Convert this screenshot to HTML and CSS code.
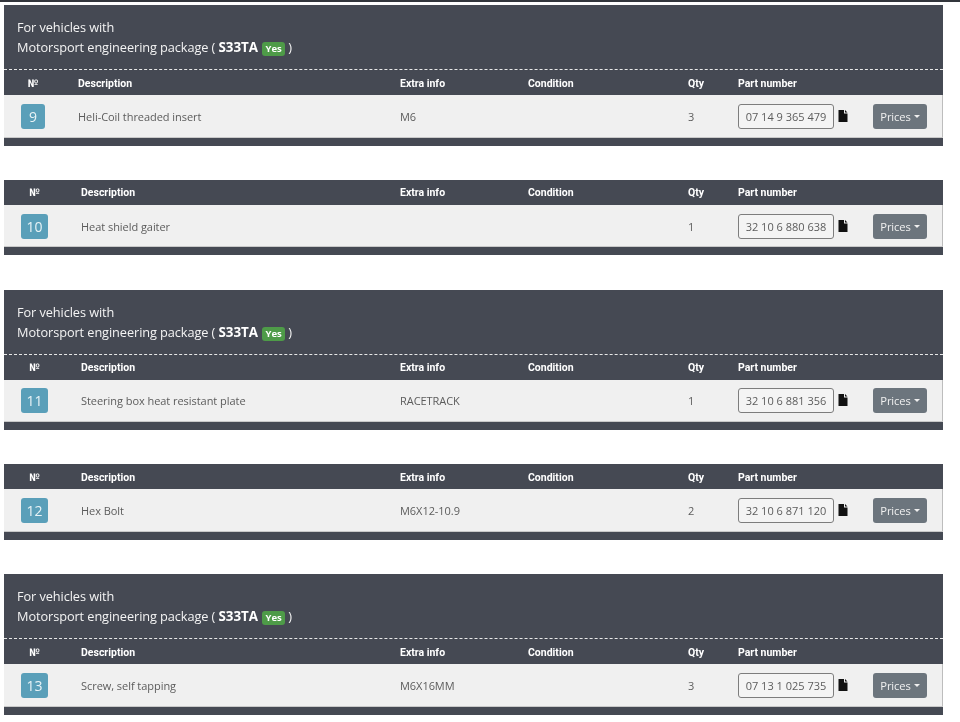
FILE: index.html
```html
<!DOCTYPE html>
<html lang="en">
<head>
<meta charset="utf-8">
<title>Parts</title>
<link rel="stylesheet" href="styles.css">
</head>
<body>
<div class="topbar"></div>
<main class="list">
  <section class="panel">
    <div class="note">For vehicles with<br>Motorsport engineering package ( <b>S33TA</b> <span class="yes">Yes</span> )</div>
    <table class="parts">
      <thead><tr><th class="c-num"><span class="num-head">№</span></th><th>Description</th><th class="c-extra">Extra info</th><th class="c-cond">Condition</th><th class="c-qty">Qty</th><th class="c-part">Part number</th><th class="c-btn"></th></tr></thead>
      <tbody><tr><td class="c-num"><span class="badge">9</span></td><td>Heli-Coil threaded insert</td><td>M6</td><td></td><td>3</td><td class="c-part"><div class="pn"><span class="pn-box">07 14 9 365 479</span><svg class="doc" viewBox="0 0 10 12"><path d="M0.5 0H6V3.5H9.5V12H0.5ZM7 0L9.5 2.5H7Z"/></svg></div></td><td class="c-btn"><span class="btn">Prices<i class="caret"></i></span></td></tr></tbody>
    </table>
  </section>
  <section class="panel">
    <table class="parts">
      <thead><tr><th class="c-num"><span class="num-head">№</span></th><th>Description</th><th class="c-extra">Extra info</th><th class="c-cond">Condition</th><th class="c-qty">Qty</th><th class="c-part">Part number</th><th class="c-btn"></th></tr></thead>
      <tbody><tr><td class="c-num"><span class="badge">10</span></td><td>Heat shield gaiter</td><td></td><td></td><td>1</td><td class="c-part"><div class="pn"><span class="pn-box">32 10 6 880 638</span><svg class="doc" viewBox="0 0 10 12"><path d="M0.5 0H6V3.5H9.5V12H0.5ZM7 0L9.5 2.5H7Z"/></svg></div></td><td class="c-btn"><span class="btn">Prices<i class="caret"></i></span></td></tr></tbody>
    </table>
  </section>
  <section class="panel">
    <div class="note">For vehicles with<br>Motorsport engineering package ( <b>S33TA</b> <span class="yes">Yes</span> )</div>
    <table class="parts">
      <thead><tr><th class="c-num"><span class="num-head">№</span></th><th>Description</th><th class="c-extra">Extra info</th><th class="c-cond">Condition</th><th class="c-qty">Qty</th><th class="c-part">Part number</th><th class="c-btn"></th></tr></thead>
      <tbody><tr><td class="c-num"><span class="badge">11</span></td><td>Steering box heat resistant plate</td><td>RACETRACK</td><td></td><td>1</td><td class="c-part"><div class="pn"><span class="pn-box">32 10 6 881 356</span><svg class="doc" viewBox="0 0 10 12"><path d="M0.5 0H6V3.5H9.5V12H0.5ZM7 0L9.5 2.5H7Z"/></svg></div></td><td class="c-btn"><span class="btn">Prices<i class="caret"></i></span></td></tr></tbody>
    </table>
  </section>
  <section class="panel">
    <table class="parts">
      <thead><tr><th class="c-num"><span class="num-head">№</span></th><th>Description</th><th class="c-extra">Extra info</th><th class="c-cond">Condition</th><th class="c-qty">Qty</th><th class="c-part">Part number</th><th class="c-btn"></th></tr></thead>
      <tbody><tr><td class="c-num"><span class="badge">12</span></td><td>Hex Bolt</td><td>M6X12-10.9</td><td></td><td>2</td><td class="c-part"><div class="pn"><span class="pn-box">32 10 6 871 120</span><svg class="doc" viewBox="0 0 10 12"><path d="M0.5 0H6V3.5H9.5V12H0.5ZM7 0L9.5 2.5H7Z"/></svg></div></td><td class="c-btn"><span class="btn">Prices<i class="caret"></i></span></td></tr></tbody>
    </table>
  </section>
  <section class="panel">
    <div class="note">For vehicles with<br>Motorsport engineering package ( <b>S33TA</b> <span class="yes">Yes</span> )</div>
    <table class="parts">
      <thead><tr><th class="c-num"><span class="num-head">№</span></th><th>Description</th><th class="c-extra">Extra info</th><th class="c-cond">Condition</th><th class="c-qty">Qty</th><th class="c-part">Part number</th><th class="c-btn"></th></tr></thead>
      <tbody><tr><td class="c-num"><span class="badge">13</span></td><td>Screw, self tapping</td><td>M6X16MM</td><td></td><td>3</td><td class="c-part"><div class="pn"><span class="pn-box">07 13 1 025 735</span><svg class="doc" viewBox="0 0 10 12"><path d="M0.5 0H6V3.5H9.5V12H0.5ZM7 0L9.5 2.5H7Z"/></svg></div></td><td class="c-btn"><span class="btn">Prices<i class="caret"></i></span></td></tr></tbody>
    </table>
  </section>
</main>
</body>
</html>
```
FILE: styles.css
```css
html, body { margin: 0; padding: 0; background: #fff; }
body { height: 722px; overflow: hidden; font-family: "Open Sans", "Liberation Sans", sans-serif; color: #555; }
.topbar { height: 2px; background: #33363c; }
.list { padding: 3px 17px 0 4px; display: flex; flex-direction: column; gap: 34.25px; filter: blur(0.3px); }
.panel { background: #454953; padding-bottom: 8px; }
.note { height: 65px; box-sizing: border-box; padding: 12px 13px 0; font-size: 12.75px; letter-spacing: -0.08px; line-height: 20px; color: #f4f4f4; border-bottom: 1px dashed #e8e8e8; }
.note b { font-weight: 700; font-size: 13.4px; color: #fff; }
.yes { display: inline-block; margin-left: 1px; background: #4e9b48; color: #fff; font-size: 9.5px; font-weight: 700; line-height: 14px; padding: 0 3.5px; border-radius: 3px; vertical-align: 0; }
.parts { width: 100%; border-collapse: collapse; font-size: 11px; }
.parts th { height: 25px; box-sizing: border-box; padding: 1px 0 0; text-align: left; font-family: Roboto, "Open Sans", sans-serif; font-size: 10.5px; font-weight: 700; color: #fff; }
.parts td { height: 40.5px; padding: 1px 0 0; background: #f0f0f0; border-bottom: 1px solid #c9c9c9; color: #5c5c5c; letter-spacing: -0.05px; }
.parts td:last-child { border-right: 1px solid #bdbdbd; }
.parts .c-num { width: 1px; padding: 1px 33px 0 17px; }
.parts th.c-num { text-align: center; padding: 1px 33px 0 17px; }
.c-extra { width: 128px; }
.c-cond { width: 160px; }
.c-qty { width: 50px; }
.c-part { width: 135px; }
.c-btn { width: 69px; }
.badge { display: block; min-width: 13px; padding: 0 5.5px; height: 25px; line-height: 25px; background: #5a9fb9; color: #e8f3f6; font-size: 14px; letter-spacing: 0; text-align: center; border-radius: 3px; }
.pn { display: flex; align-items: center; gap: 4px; }
.pn-box { width: 96px; height: 25px; box-sizing: border-box; border: 1px solid #7d7d7d; border-radius: 3px; line-height: 23px; letter-spacing: 0; text-align: center; background: #f4f4f4; white-space: nowrap; }
.doc { width: 10px; height: 12px; fill: #111; margin-bottom: 1px; }
.btn { display: inline-flex; align-items: center; justify-content: center; gap: 3px; width: 54px; height: 25px; background: #6c757d; color: #f0f0f0; border-radius: 3px; font-size: 11.2px; letter-spacing: -0.1px; }
.caret { width: 0; height: 0; border-left: 3.5px solid transparent; border-right: 3.5px solid transparent; border-top: 3.5px solid #f0f0f0; }
```
